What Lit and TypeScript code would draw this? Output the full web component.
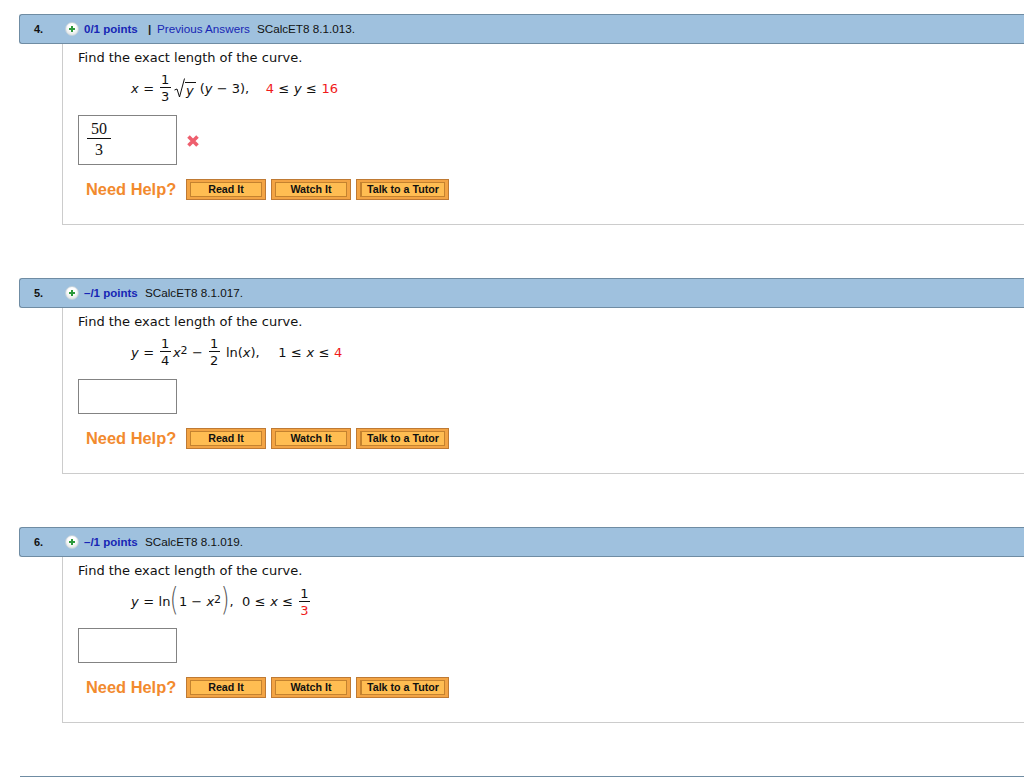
import { LitElement, html, css, nothing } from "lit";
import { customElement } from "lit/decorators.js";

const frac = (a: unknown, b: unknown, red = false) => html`<span class="frac"><span class="num">${a}</span><span class="den ${red ? "red" : ""}">${b}</span></span>`;

const le = html`<span class="sym">≤</span>`;

@customElement("app-root")
export class AppRoot extends LitElement {
  static styles = css`
    :host { display: block; height: 777px; overflow: hidden; padding-top: 14px; box-sizing: border-box; background: #fff; font-family: "DejaVu Sans", sans-serif; color: #111; }
    .q { margin-left: 19px; height: 249px; }
    .q.first { height: 264px; }
    .bar { height: 27px; padding-bottom: 1px; display: flex; align-items: center; background: #9fc1de; border: 1px solid #6f8ca3; border-right: 0; border-radius: 3px 0 0 3px; font: 11.7px "Liberation Sans", sans-serif; color: #111; }
    .n { font-weight: 700; font-size: 11px; width: 45px; padding-left: 14px; box-sizing: border-box; }
    .plus { width: 12px; height: 12px; border-radius: 50%; background: radial-gradient(circle at 50% 35%, #fff 35%, #d3d8d8 100%); border: 1px solid #c3d2dc; display: flex; align-items: center; justify-content: center; margin-right: 5px; }
    .points { font-weight: 700; color: #1726b5; width: 54px; white-space: nowrap; font-size: 11.5px; }
    .sep { margin-left: 10px; width: 9px; font-weight: 700; color: #222; }
    .prev { color: #1726b5; margin-right: 7px; }
    .code { margin-left: 7px; }
    .prevd .code { margin-left: 0; }
    .body { margin-left: 43px; border-left: 1px solid #ccc; border-bottom: 1px solid #ccc; padding-left: 15px; box-sizing: border-box; height: 181px; }
    .q:not(.first) .body { height: 166px; }
    .title { font-size: 13px; line-height: 16px; padding-top: 6px; }
    .math { display: flex; align-items: center; height: 30px; margin-top: 7px; padding-left: 53px; font-size: 13px; white-space: pre; }
    .i { font-style: italic; }
    .sym { margin: 0 4.5px; }
    .gap { width: 2px; }
    .red { color: #f01a1a; }
    .frac { display: inline-flex; flex-direction: column; align-items: center; margin: 0 2px 0 1px; font-size: 13px; }
    .num { border-bottom: 1px solid #111; padding: 0 1.5px; line-height: 15px; }
    .den { line-height: 17px; }
    .last-frac .frac { margin-top: 3px; }
    sup { font-size: 11px; line-height: 0; position: relative; top: -1px; vertical-align: 5px; }
    .paren { font-size: 32px; font-weight: 200; line-height: 30px; color: #555; transform: scaleX(0.7); margin: 0 -2px; position: relative; top: -2px; }
    .root { display: inline-flex; align-items: flex-end; height: 20px; margin-left: 1px; }
    .root svg { display: block; }
    .root span { border-top: 1px solid #111; padding: 0 2px 0 1px; line-height: 15px; }
    .answer { display: flex; align-items: center; margin-top: 12px; }
    .box { width: 99px; height: 35px; box-sizing: border-box; border: 1px solid #838383; background: #fff; }
    .box.tall { height: 50px; padding: 4px 0 0 6px; font: 16px "Liberation Serif", serif; color: #111; }
    .box.tall .num { line-height: 18px; padding: 0 4px; }
    .box.tall .den { line-height: 21px; }
    .box.tall .frac { font-size: 16px; margin: 0 0 0 2px; }
    .x { margin: 2px 0 0 9px; display: block; }
    .help { display: flex; align-items: center; margin-top: 14px; padding-left: 8px; height: 21px; }
    .need { font: 700 16.4px "Liberation Sans", sans-serif; color: #f28a2e; width: 100px; white-space: nowrap; }
    .btn { height: 21px; box-sizing: border-box; border: 1px solid #bf7a34; background: #f3a444; padding: 2px 3px; margin-right: 5px; display: block; }
    .btn span { display: flex; height: 100%; box-sizing: border-box; align-items: center; justify-content: center; border: 1px solid #c4822f; background: #ffbd52; font: 700 10.7px "Liberation Sans", sans-serif; color: #111; white-space: nowrap; padding-bottom: 1px; }
    .w80 { width: 80px; }
    .w93 { width: 93px; margin-right: 0; }
    .w93 span { border-width: 1px 1px 1px 2px; }
    .last { margin-left: 1px; height: 1px; background: #6f8ca3; }
  `;

  private help() {
    return html`<div class="help">
      <span class="need">Need Help?</span>
      <span class="btn w80"><span>Read It</span></span>
      <span class="btn w80"><span>Watch It</span></span>
      <span class="btn w93"><span>Talk to a Tutor</span></span>
    </div>`;
  }

  private bar(n: string, pts: string, code: string, prev = false) {
    return html`<div class="bar ${prev ? "prevd" : ""}">
      <span class="n">${n}</span>
      <span class="plus"><svg width="8" height="8" viewBox="0 0 8 8"><path d="M4 1v6M1 4h6" stroke="#2e9a3c" stroke-width="2"/></svg></span>
      <span class="points">${pts}</span>
      ${prev ? html`<span class="sep">|</span><span class="prev">Previous Answers</span>` : nothing}
      <span class="code">${code}</span>
    </div>`;
  }

  render() {
    return html`
      <section class="q first">
        ${this.bar("4.", "0/1 points", "SCalcET8 8.1.013.", true)}
        <div class="body">
          <div class="title">Find the exact length of the curve.</div>
          <div class="math"><span class="i">x</span><span class="sym">=</span>${frac("1", "3")}<span class="root"><svg width="11" height="20" viewBox="0 0 11 20"><path d="M0.5 12 L3 11 L5.5 19 L10.5 0.5" fill="none" stroke="#111"/></svg><span class="i">y</span></span> (<span class="i">y</span> − 3),    <span class="red">4</span>${le}<span class="i">y</span>${le}<span class="red">16</span></div>
          <div class="answer">
            <div class="box tall">${frac("50", "3")}</div>
            <svg class="x" width="14" height="14" viewBox="0 0 14 14"><path d="M2.5 2.5 L11.5 11.5 M11.5 2.5 L2.5 11.5" stroke="#ee5f6e" stroke-width="3.6"/></svg>
          </div>
          ${this.help()}
        </div>
      </section>
      <section class="q">
        ${this.bar("5.", "–/1 points", "SCalcET8 8.1.017.")}
        <div class="body">
          <div class="title">Find the exact length of the curve.</div>
          <div class="math"><span class="i">y</span><span class="sym">=</span>${frac("1", "4")}<span class="i">x</span><sup>2</sup><span class="sym">−</span>${frac("1", "2")} ln(<span class="i">x</span>),    <span class="gap"></span>1${le}<span class="i">x</span>${le}<span class="red">4</span></div>
          <div class="answer"><div class="box"></div></div>
          ${this.help()}
        </div>
      </section>
      <section class="q">
        ${this.bar("6.", "–/1 points", "SCalcET8 8.1.019.")}
        <div class="body">
          <div class="title">Find the exact length of the curve.</div>
          <div class="math last-frac"><span class="i">y</span><span class="sym">=</span>ln<span class="paren">(</span>1 − <span class="i">x</span><sup>2</sup><span class="paren">)</span>,  0${le}<span class="i">x</span>${le}${frac("1", "3", true)}</div>
          <div class="answer"><div class="box"></div></div>
          ${this.help()}
        </div>
      </section>
      <div class="q"><div class="last"></div></div>
    `;
  }
}
